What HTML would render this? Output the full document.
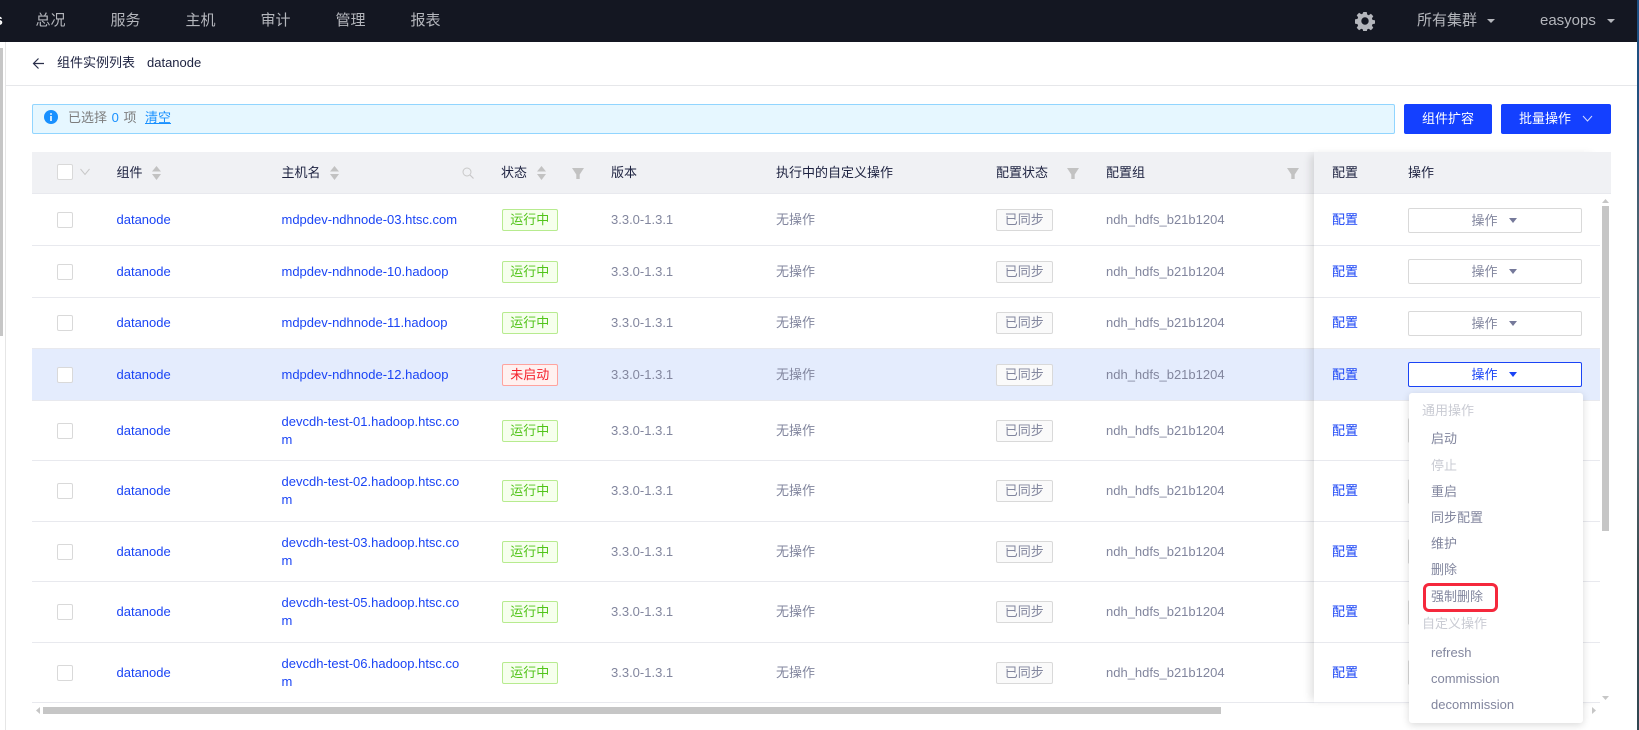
<!DOCTYPE html>
<html lang="zh"><head><meta charset="utf-8"><title>组件实例列表</title>
<style>
*{box-sizing:border-box}
html,body{margin:0;padding:0;width:1639px;height:730px;overflow:hidden;background:#fff}
body{position:relative;font:13px/18px "Liberation Sans","Noto Sans CJK SC",sans-serif;color:#82869e}
.a{position:absolute;white-space:nowrap}
#top{left:0;top:0;width:1637px;height:42px;background:#141722;color:#b4b6bc;font-size:15px;line-height:41px}
.r{position:absolute;left:32px;width:1568px;border-bottom:1px solid #e8e9ee}
.r.h{background:#e4ecfd}
.c{position:absolute;top:0;height:100%;display:flex;align-items:center;white-space:nowrap}
.cb{left:25px;width:16px}
.cb i{display:block;width:16px;height:16px;background:#fff;border:1px solid #d9d9d9;border-radius:2px}
.n{left:84.500px;color:#1a44f5}
.hn{left:249.500px;color:#1a44f5}
.st{left:469.500px}
.ver{left:579px}
.no{left:744px}
.cs{left:964px}
.cg{left:1074px}
.tag{display:block;width:56.500px;height:22px;line-height:20px;text-align:center;border:1px solid;border-radius:2px;font-size:13px}
.g{background:#f6ffed;border-color:#b7eb8f;color:#52c41a}
.e{background:#fff1f0;border-color:#ffa39e;color:#f5222d}
.s{background:#fafafa;border-color:#d9d9d9;color:#82869e}
#fix{left:1314px;top:152px;width:286px;height:551px;box-shadow:-6px 0 8px -3px rgba(0,0,0,.13)}
.btn{display:block;width:174px;height:25px;line-height:23px;background:#fff;border:1px solid #d9d9d9;border-radius:2px;text-align:center;color:#82869e;padding-right:2px}
.btn b{display:inline-block;width:0;height:0;border:4.500px solid transparent;border-top:5px solid #75799a;border-bottom:0;margin-left:11px;vertical-align:2px}
.btn.on{border-color:#1a44f5;color:#1a44f5}
.btn.on b{border-top-color:#1a44f5}
.th{position:absolute;top:152px;height:42px;line-height:42px;color:#1d2240;white-space:nowrap}
.sort{position:absolute;top:166px;width:9px;height:14px}
.fil{position:absolute;top:168px;width:12px;height:12px}
#dd{left:1409px;top:393px;width:174px;height:330px;background:#fff;border-radius:3px;box-shadow:0 2px 8px rgba(0,0,0,.15)}
#dd div{position:absolute;white-space:nowrap;height:18px}
.gh{left:13px;color:#c9cbd3}
.it{left:22px;color:#82869e}
#dd .dis{color:#c9cbd3}
</style></head><body>
<div class="a" id="top">
<span class="a" style="left:-6px;top:0;color:#fff;font-weight:bold;font-size:16px">s</span>
<span class="a" style="left:35.500px">总况</span><span class="a" style="left:110.500px">服务</span><span class="a" style="left:185.500px">主机</span><span class="a" style="left:260.500px">审计</span><span class="a" style="left:335.500px">管理</span><span class="a" style="left:410.500px">报表</span>
<svg class="a" style="left:1355px;top:11px" width="20" height="20" viewBox="0 0 20 20"><path fill="#b4b6bc" fill-rule="evenodd" d="M8.300 1h3.400l.5 2.500 1.500.7 2.200-1.400 2.400 2.400-1.400 2.200.6 1.500 2.500.5v3.200l-2.500.5-.6 1.500 1.400 2.200-2.400 2.400-2.200-1.400-1.500.6-.5 2.600H8.300l-.5-2.600-1.500-.6-2.200 1.400-2.400-2.400 1.400-2.200-.6-1.500-2.500-.5V8.400l2.500-.5.6-1.500-1.400-2.200 2.400-2.400 2.200 1.400 1.500-.7zM10 6.300a3.700 3.700 0 1 0 0 7.400 3.700 3.700 0 0 0 0-7.400z"/></svg>
<span class="a" style="left:1417px">所有集群</span>
<svg class="a" style="left:1487px;top:18px" width="8" height="6"><path fill="#b4b6bc" d="M0 1h8L4 5z"/></svg>
<span class="a" style="left:1540px">easyops</span>
<svg class="a" style="left:1607px;top:18px" width="8" height="6"><path fill="#b4b6bc" d="M0 1h8L4 5z"/></svg>
</div>
<div class="a" style="left:0;top:48px;width:3px;height:288px;background:#c6c6c6"></div>
<div class="a" style="left:5px;top:42px;width:1px;height:688px;background:#e6e6e6"></div>
<div class="a" style="left:1637px;top:0;width:2px;height:730px;background:linear-gradient(#1c4f82 0,#1f5080 90px,#4a6270 220px,#55707a 400px,#3d4e52 560px,#2f4651 730px)"></div>
<div class="a" style="left:6px;top:85px;width:1631px;height:1px;background:#e6e7ea"></div>
<svg class="a" style="left:32px;top:57px" width="13" height="13" viewBox="0 0 13 13"><path fill="none" stroke="#2a2f4a" stroke-width="1.200" d="M12 6.500H1.500M6.500 1.500l-5 5 5 5"/></svg>
<span class="a" style="left:57px;top:54px;color:#1d2240">组件实例列表</span>
<span class="a" style="left:147px;top:54px;color:#1d2240">datanode</span>
<div class="a" style="left:32px;top:104px;width:1363px;height:30px;background:#e6f7ff;border:1px solid #91d5ff;border-radius:2px"></div>
<svg class="a" style="left:44px;top:110px" width="14" height="14" viewBox="0 0 14 14"><circle cx="7" cy="7" r="7" fill="#1890ff"/><rect x="6.200" y="6" width="1.600" height="5" fill="#fff"/><rect x="6.200" y="3.200" width="1.600" height="1.600" fill="#fff"/></svg>
<span class="a" style="left:68px;top:109px;font-size:13px;color:#7d7d7d;word-spacing:1px">已选择 <span style="color:#1890ff">0</span> 项</span>
<span class="a" style="left:145px;top:109px;font-size:13px;color:#1890ff;text-decoration:underline">清空</span>
<div class="a" style="left:1404px;top:104px;width:88px;height:30px;line-height:29px;background:#1440ff;border-radius:2px;color:#fff;text-align:center;font-size:13px">组件扩容</div>
<div class="a" style="left:1501px;top:104px;width:110px;height:30px;line-height:29px;background:#1440ff;border-radius:2px;color:#fff;font-size:13px;padding-left:18px">批量操作</div>
<svg class="a" style="left:1582px;top:115px" width="11" height="8"><path fill="none" stroke="#d5dcff" d="M1 1l4.500 5L10 1"/></svg>

<div class="a" style="left:32px;top:152px;width:1579px;height:42px;background:#f0f1f4;border-bottom:1px solid #e8e9ee"></div>
<div class="a" style="left:57px;top:164px;width:16px;height:16px;background:#fff;border:1px solid #d9d9d9;border-radius:2px"></div>
<svg class="a" style="left:80px;top:168px" width="10" height="8"><path fill="none" stroke="#c8c8c8" d="M.5 1l4.500 5.500L9.500 1"/></svg>
<span class="th" style="left:116.500px">组件</span>
<svg class="sort" style="left:152px" viewBox="0 0 9 14"><path fill="#c2c2c2" d="M4.500 0L9 5.500H0zM0 8h9l-4.500 6z"/></svg>
<span class="th" style="left:281.500px">主机名</span>
<svg class="sort" style="left:330px" viewBox="0 0 9 14"><path fill="#c2c2c2" d="M4.500 0L9 5.500H0zM0 8h9l-4.500 6z"/></svg>
<svg class="a" style="left:462px;top:167px" width="12" height="12" viewBox="0 0 12 12"><circle cx="5" cy="5" r="4" fill="none" stroke="#c8c8c8"/><path stroke="#c8c8c8" stroke-width="1.200" d="M8 8l3.500 3.500"/></svg>
<span class="th" style="left:501px">状态</span>
<svg class="sort" style="left:537px" viewBox="0 0 9 14"><path fill="#c2c2c2" d="M4.500 0L9 5.500H0zM0 8h9l-4.500 6z"/></svg>
<svg class="fil" style="left:572px" viewBox="0 0 12 12"><path fill="#c2c2c2" d="M0 0h12L7.700 6.500V11H4.300V6.500z"/></svg>
<span class="th" style="left:611px">版本</span>
<span class="th" style="left:776px">执行中的自定义操作</span>
<span class="th" style="left:996px">配置状态</span>
<svg class="fil" style="left:1067px" viewBox="0 0 12 12"><path fill="#c2c2c2" d="M0 0h12L7.700 6.500V11H4.300V6.500z"/></svg>
<span class="th" style="left:1106px">配置组</span>
<svg class="fil" style="left:1287px" viewBox="0 0 12 12"><path fill="#c2c2c2" d="M0 0h12L7.700 6.500V11H4.300V6.500z"/></svg>

<div class="r" style="top:195px;height:51px"><div class="c cb"><i></i></div><div class="c n">datanode</div><div class="c hn">mdpdev-ndhnode-03.htsc.com</div><div class="c st"><span class="tag g">运行中</span></div><div class="c ver">3.3.0-1.3.1</div><div class="c no">无操作</div><div class="c cs"><span class="tag s">已同步</span></div><div class="c cg">ndh_hdfs_b21b1204</div></div>
<div class="r" style="top:246px;height:52px"><div class="c cb"><i></i></div><div class="c n">datanode</div><div class="c hn">mdpdev-ndhnode-10.hadoop</div><div class="c st"><span class="tag g">运行中</span></div><div class="c ver">3.3.0-1.3.1</div><div class="c no">无操作</div><div class="c cs"><span class="tag s">已同步</span></div><div class="c cg">ndh_hdfs_b21b1204</div></div>
<div class="r" style="top:298px;height:51px"><div class="c cb"><i></i></div><div class="c n">datanode</div><div class="c hn">mdpdev-ndhnode-11.hadoop</div><div class="c st"><span class="tag g">运行中</span></div><div class="c ver">3.3.0-1.3.1</div><div class="c no">无操作</div><div class="c cs"><span class="tag s">已同步</span></div><div class="c cg">ndh_hdfs_b21b1204</div></div>
<div class="r h" style="top:349px;height:52px"><div class="c cb"><i></i></div><div class="c n">datanode</div><div class="c hn">mdpdev-ndhnode-12.hadoop</div><div class="c st"><span class="tag e">未启动</span></div><div class="c ver">3.3.0-1.3.1</div><div class="c no">无操作</div><div class="c cs"><span class="tag s">已同步</span></div><div class="c cg">ndh_hdfs_b21b1204</div></div>
<div class="r" style="top:401px;height:60px"><div class="c cb"><i></i></div><div class="c n">datanode</div><div class="c hn">devcdh-test-01.hadoop.htsc.co<br>m</div><div class="c st"><span class="tag g">运行中</span></div><div class="c ver">3.3.0-1.3.1</div><div class="c no">无操作</div><div class="c cs"><span class="tag s">已同步</span></div><div class="c cg">ndh_hdfs_b21b1204</div></div>
<div class="r" style="top:461px;height:61px"><div class="c cb"><i></i></div><div class="c n">datanode</div><div class="c hn">devcdh-test-02.hadoop.htsc.co<br>m</div><div class="c st"><span class="tag g">运行中</span></div><div class="c ver">3.3.0-1.3.1</div><div class="c no">无操作</div><div class="c cs"><span class="tag s">已同步</span></div><div class="c cg">ndh_hdfs_b21b1204</div></div>
<div class="r" style="top:522px;height:60px"><div class="c cb"><i></i></div><div class="c n">datanode</div><div class="c hn">devcdh-test-03.hadoop.htsc.co<br>m</div><div class="c st"><span class="tag g">运行中</span></div><div class="c ver">3.3.0-1.3.1</div><div class="c no">无操作</div><div class="c cs"><span class="tag s">已同步</span></div><div class="c cg">ndh_hdfs_b21b1204</div></div>
<div class="r" style="top:582px;height:61px"><div class="c cb"><i></i></div><div class="c n">datanode</div><div class="c hn">devcdh-test-05.hadoop.htsc.co<br>m</div><div class="c st"><span class="tag g">运行中</span></div><div class="c ver">3.3.0-1.3.1</div><div class="c no">无操作</div><div class="c cs"><span class="tag s">已同步</span></div><div class="c cg">ndh_hdfs_b21b1204</div></div>
<div class="r" style="top:643px;height:60px"><div class="c cb"><i></i></div><div class="c n">datanode</div><div class="c hn">devcdh-test-06.hadoop.htsc.co<br>m</div><div class="c st"><span class="tag g">运行中</span></div><div class="c ver">3.3.0-1.3.1</div><div class="c no">无操作</div><div class="c cs"><span class="tag s">已同步</span></div><div class="c cg">ndh_hdfs_b21b1204</div></div>

<div class="a" id="fix"></div>
<div class="a" style="left:1314px;top:152px;width:297px;height:42px;background:#f0f1f4;border-bottom:1px solid #e8e9ee"></div>
<span class="th" style="left:1332px">配置</span>
<span class="th" style="left:1408px">操作</span>
<div class="r" style="left:1314px;width:286px;top:195px;height:51px;background:#fff"><div class="c" style="left:18px;color:#1a44f5">配置</div><div class="c" style="left:94px"><span class="btn">操作<b></b></span></div></div>
<div class="r" style="left:1314px;width:286px;top:246px;height:52px;background:#fff"><div class="c" style="left:18px;color:#1a44f5">配置</div><div class="c" style="left:94px"><span class="btn">操作<b></b></span></div></div>
<div class="r" style="left:1314px;width:286px;top:298px;height:51px;background:#fff"><div class="c" style="left:18px;color:#1a44f5">配置</div><div class="c" style="left:94px"><span class="btn">操作<b></b></span></div></div>
<div class="r" style="left:1314px;width:286px;top:349px;height:52px;background:#e4ecfd"><div class="c" style="left:18px;color:#1a44f5">配置</div><div class="c" style="left:94px"><span class="btn on">操作<b></b></span></div></div>
<div class="r" style="left:1314px;width:286px;top:401px;height:60px;background:#fff"><div class="c" style="left:18px;color:#1a44f5">配置</div><div class="c" style="left:94px"><span class="btn">操作<b></b></span></div></div>
<div class="r" style="left:1314px;width:286px;top:461px;height:61px;background:#fff"><div class="c" style="left:18px;color:#1a44f5">配置</div><div class="c" style="left:94px"><span class="btn">操作<b></b></span></div></div>
<div class="r" style="left:1314px;width:286px;top:522px;height:60px;background:#fff"><div class="c" style="left:18px;color:#1a44f5">配置</div><div class="c" style="left:94px"><span class="btn">操作<b></b></span></div></div>
<div class="r" style="left:1314px;width:286px;top:582px;height:61px;background:#fff"><div class="c" style="left:18px;color:#1a44f5">配置</div><div class="c" style="left:94px"><span class="btn">操作<b></b></span></div></div>
<div class="r" style="left:1314px;width:286px;top:643px;height:60px;background:#fff"><div class="c" style="left:18px;color:#1a44f5">配置</div><div class="c" style="left:94px"><span class="btn">操作<b></b></span></div></div>

<div class="a" style="left:1602px;top:206px;width:7px;height:325px;background:#c6c6c6"></div>
<svg class="a" style="left:1602px;top:199px" width="7" height="5"><path fill="#c6c6c6" d="M3.500 0L7 4H0z"/></svg>
<svg class="a" style="left:1602px;top:696px" width="7" height="5"><path fill="#c6c6c6" d="M0 0h7L3.500 4z"/></svg>
<div class="a" style="left:43px;top:707px;width:1178px;height:7px;background:#c6c6c6"></div>
<svg class="a" style="left:36px;top:707px" width="5" height="7"><path fill="#c6c6c6" d="M4 0v7L0 3.500z"/></svg>
<svg class="a" style="left:1592px;top:707px" width="5" height="7"><path fill="#c6c6c6" d="M0 0v7l4-3.500z"/></svg>

<div class="a" id="dd">
<div class="gh" style="top:9px">通用操作</div>
<div class="it" style="top:37px">启动</div>
<div class="it dis" style="top:64px">停止</div>
<div class="it" style="top:90px">重启</div>
<div class="it" style="top:116px">同步配置</div>
<div class="it" style="top:142px">维护</div>
<div class="it" style="top:168px">删除</div>
<div class="it" style="top:195px">强制删除</div>
<div class="gh" style="top:222px">自定义操作</div>
<div class="it" style="top:251px">refresh</div>
<div class="it" style="top:277px">commission</div>
<div class="it" style="top:303px">decommission</div>
</div>
<div class="a" style="left:1423px;top:583px;width:75px;height:29px;border:3px solid #f5283c;border-radius:6px"></div>
</body></html>
